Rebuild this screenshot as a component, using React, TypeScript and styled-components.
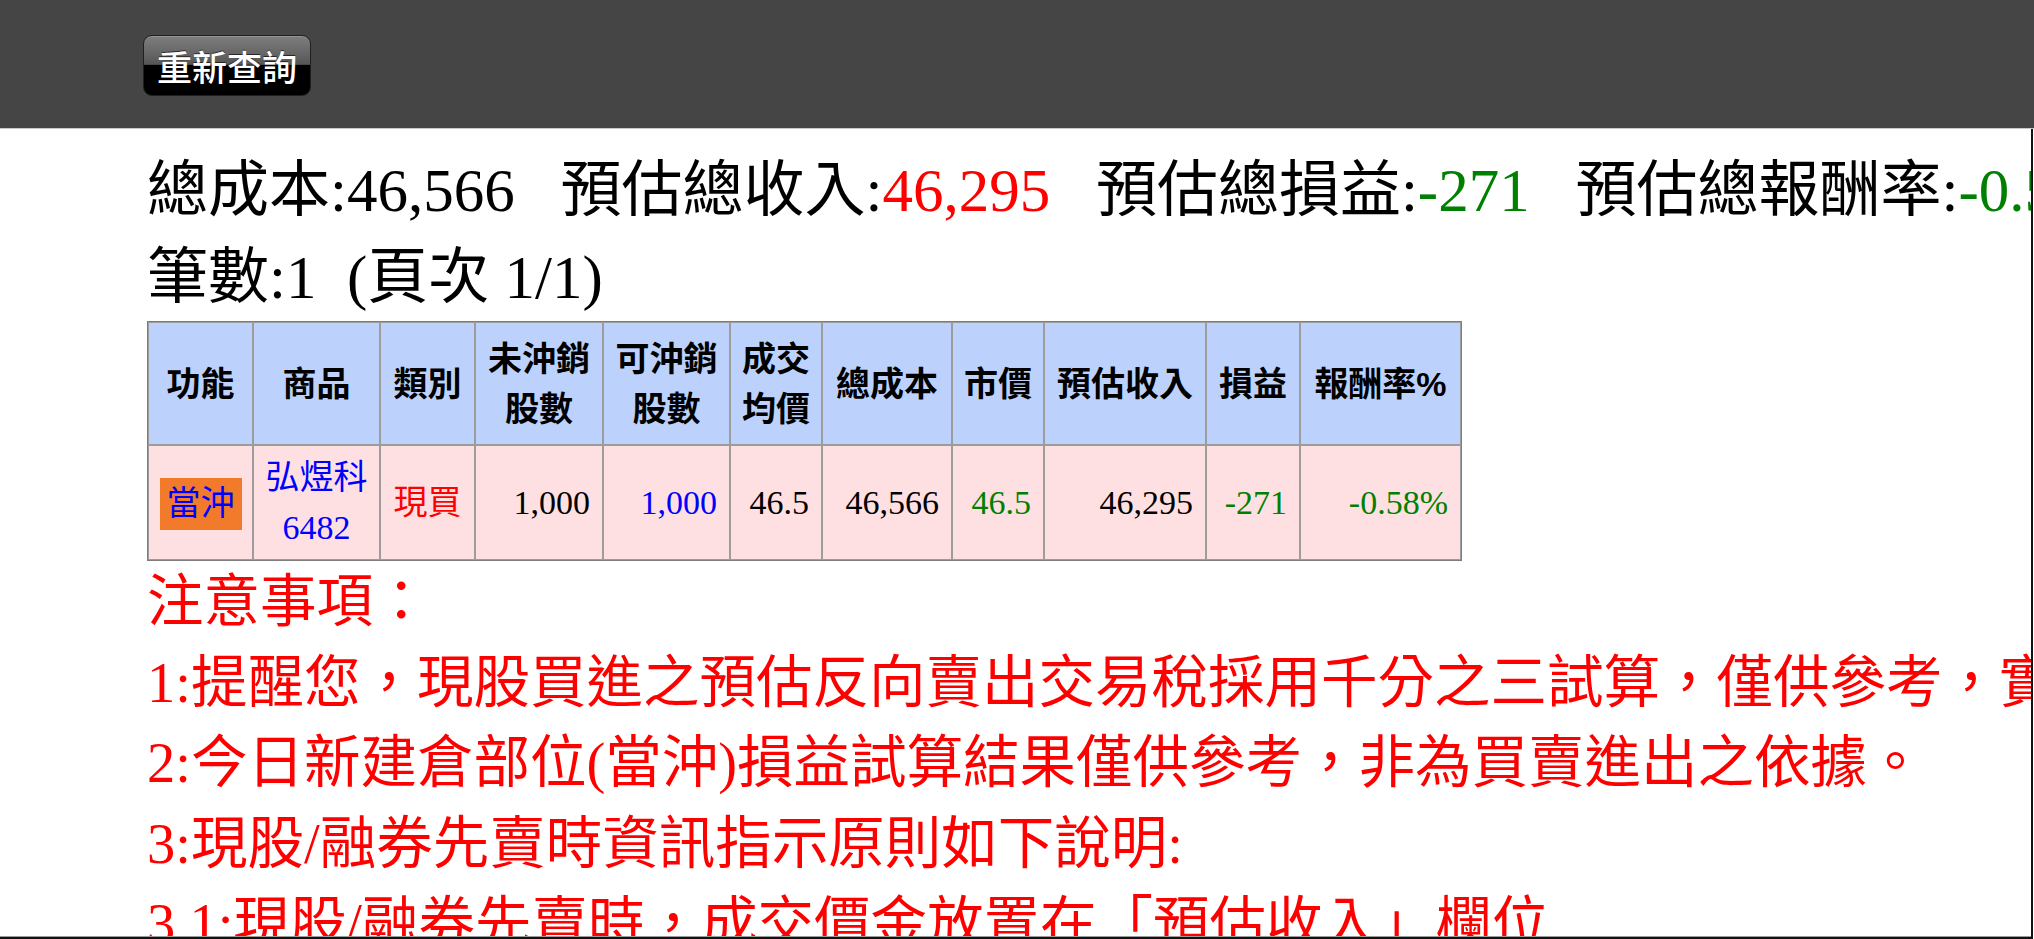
import React from "react";
import styled, { createGlobalStyle } from "styled-components";

const GlobalStyle = createGlobalStyle`
  *, *::before, *::after { box-sizing: border-box; }
  html, body {
    margin: 0;
    padding: 0;
    width: 2034px;
    height: 939px;
    overflow: hidden;
    background: #ffffff;
  }
  #root { width: 2034px; height: 939px; }
`;

const SERIF = `"Liberation Serif", "Noto Sans CJK TC", serif`;
const SANS = `"Liberation Sans", "Noto Sans CJK TC", sans-serif`;

const Page = styled.div`
  width: 2034px;
  height: 939px;
  display: flex;
  flex-direction: column;
`;

const TopBar = styled.header`
  height: 129px;
  flex: none;
  background: #454545;
  border-bottom: 1px solid #c9c9c9;
  display: flex;
  align-items: flex-start;
  padding: 35px 0 0 143px;
`;

const RequeryButton = styled.button`
  height: 61px;
  padding: 0 13px;
  border-radius: 9px;
  border: 1px solid #202020;
  background: linear-gradient(
    to bottom,
    #7e7e7e 0%,
    #6a6a6a 25%,
    #565656 48%,
    #000000 50%,
    #000000 100%
  );
  box-shadow: inset 0 1px 0 rgba(255, 255, 255, 0.18);
  color: #ffffff;
  font-family: "Noto Sans CJK TC", sans-serif;
  font-weight: 500;
  font-size: 35px;
  line-height: 1;
  text-shadow: 0 -1px 0 rgba(0, 0, 0, 0.6);
  cursor: pointer;
`;

const Viewport = styled.main`
  width: 2033px;
  flex: 1;
  min-height: 0;
  border-right: 2px solid #111111;
  border-bottom: 2px solid #111111;
  overflow: hidden;
`;

const Scroller = styled.div`
  height: 100%;
  border-bottom: 1px solid #9a9a9a;
  overflow: hidden;
  padding: 18px 0 0 147px;
`;

const Summary = styled.div`
  font-family: ${SERIF};
  font-size: 61px;
  line-height: 87px;
  color: #000000;
  white-space: nowrap;
`;

const SummaryLine = styled.div``;

const Value = styled.span<{ $tone?: "red" | "green" | "blue" | "black" }>`
  color: ${({ $tone }) =>
    $tone === "red"
      ? "#ff0000"
      : $tone === "green"
      ? "#008000"
      : $tone === "blue"
      ? "#0000ff"
      : "#000000"};
`;

const PositionTable = styled.table`
  table-layout: fixed;
  width: 1315px;
  border-collapse: separate;
  border-spacing: 0;
  border: 1px solid #7d7d7d;
`;

const HeadCell = styled.th`
  background: #bcd2fc;
  border: 1px solid #9c9c9c;
  padding: 11px 2px 10px;
  font-family: ${SANS};
  font-weight: 700;
  font-size: 34px;
  line-height: 50px;
  color: #000000;
  text-align: center;
  vertical-align: middle;
  white-space: nowrap;
`;

const BodyCell = styled.td<{ $align?: "center" | "right"; $tone?: "red" | "green" | "blue" | "black" }>`
  background: #fee0e3;
  border: 1px solid #9c9c9c;
  padding: ${({ $align }) => ($align === "right" ? "7px 12px 6px 2px" : "7px 2px 6px")};
  font-family: ${SERIF};
  font-size: 34px;
  line-height: 50px;
  text-align: ${({ $align }) => $align ?? "center"};
  vertical-align: middle;
  white-space: nowrap;
  color: ${({ $tone }) =>
    $tone === "red"
      ? "#ff0000"
      : $tone === "green"
      ? "#008000"
      : $tone === "blue"
      ? "#0000ff"
      : "#000000"};
`;

const DayTradeBadge = styled.span`
  display: inline-block;
  vertical-align: middle;
  background: #f27b2b;
  color: #0000ff;
  padding: 0 7px;
  line-height: 52px;
  font-family: ${SERIF};
  font-size: 34px;
`;

const Notes = styled.div`
  margin-top: 1px;
  font-family: ${SERIF};
  font-size: 56.5px;
  line-height: 80.5px;
  color: #ff0000;
  white-space: nowrap;
`;

const NoteLine = styled.div``;

const columns = [105, 127, 95, 128, 127, 92, 130, 92, 162, 94, 161];

const headers: React.ReactNode[] = [
  "功能",
  "商品",
  "類別",
  <>未沖銷<br />股數</>,
  <>可沖銷<br />股數</>,
  <>成交<br />均價</>,
  "總成本",
  "市價",
  "預估收入",
  "損益",
  "報酬率%",
];

const notes = [
  "注意事項：",
  "1:提醒您，現股買進之預估反向賣出交易稅採用千分之三試算，僅供參考，實際金額以成交回報為準。",
  "2:今日新建倉部位(當沖)損益試算結果僅供參考，非為買賣進出之依據。",
  "3:現股/融券先賣時資訊指示原則如下說明:",
  "3.1:現股/融券先賣時，成交價金放置在「預估收入」欄位",
];

const NB = "\u00a0";

export default function App() {
  return (
    <>
      <GlobalStyle />
      <Page>
        <TopBar>
          <RequeryButton type="button">重新查詢</RequeryButton>
        </TopBar>
        <Viewport>
          <Scroller>
            <Summary>
              <SummaryLine>
                總成本:46,566{NB}{NB}{NB}預估總收入:<Value $tone="red">46,295</Value>
                {NB}{NB}{NB}預估總損益:<Value $tone="green">-271</Value>
                {NB}{NB}{NB}預估總報酬率:<Value $tone="green">-0.58%</Value>
              </SummaryLine>
              <SummaryLine>
                筆數:1{NB}{NB}(頁次 1/1)
              </SummaryLine>
            </Summary>

            <PositionTable>
              <colgroup>
                {columns.map((w, i) => (
                  <col key={i} style={{ width: `${w}px` }} />
                ))}
              </colgroup>
              <thead>
                <tr>
                  {headers.map((h, i) => (
                    <HeadCell key={i}>{h}</HeadCell>
                  ))}
                </tr>
              </thead>
              <tbody>
                <tr>
                  <BodyCell>
                    <DayTradeBadge>當沖</DayTradeBadge>
                  </BodyCell>
                  <BodyCell $tone="blue">
                    弘煜科
                    <br />
                    6482
                  </BodyCell>
                  <BodyCell $tone="red">現買</BodyCell>
                  <BodyCell $align="right">1,000</BodyCell>
                  <BodyCell $align="right" $tone="blue">1,000</BodyCell>
                  <BodyCell $align="right">46.5</BodyCell>
                  <BodyCell $align="right">46,566</BodyCell>
                  <BodyCell $align="right" $tone="green">46.5</BodyCell>
                  <BodyCell $align="right">46,295</BodyCell>
                  <BodyCell $align="right" $tone="green">-271</BodyCell>
                  <BodyCell $align="right" $tone="green">-0.58%</BodyCell>
                </tr>
              </tbody>
            </PositionTable>

            <Notes>
              {notes.map((n, i) => (
                <NoteLine key={i}>{n}</NoteLine>
              ))}
            </Notes>
          </Scroller>
        </Viewport>
      </Page>
    </>
  );
}
